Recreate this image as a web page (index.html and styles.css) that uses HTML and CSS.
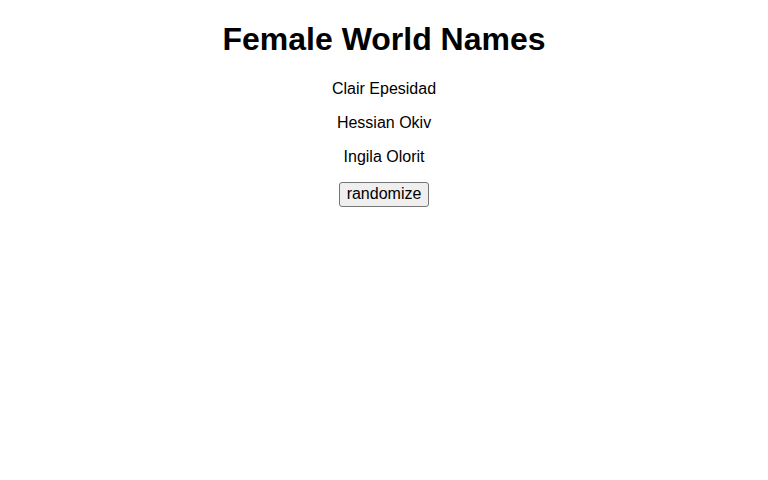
FILE: index.html
```html
<!DOCTYPE html>
<html lang="en">
  <head>
    <meta charset="utf-8">
    <title>Female World Names</title>
    <link rel="stylesheet" href="styles.css">
  </head>
  <body>
    <div class="gerador">
      <h1>Female World Names</h1>
      <p class="nome">Clair Epesidad</p>
      <p class="nome">Hessian Okiv</p>
      <p class="nome">Ingila Olorit</p>
      <button id="botao" class="botao">randomize</button>
    </div>
  </body>
</html>
```

FILE: styles.css
```css
body {
  margin: 0;
  font-family: "Liberation Sans", Arial, sans-serif;
  color: #000;
}

.gerador {
  text-align: center;
}

h1 {
  font-size: 32px;
}

.nome {
  font-size: 16px;
}

.botao {
  font-family: "Liberation Sans", Arial, sans-serif;
  font-size: 16px;
  padding: 2px 7px 3px;
  background: #efefef;
  border: 1px solid #767676;
  border-radius: 3px;
  color: #000;
}
```
